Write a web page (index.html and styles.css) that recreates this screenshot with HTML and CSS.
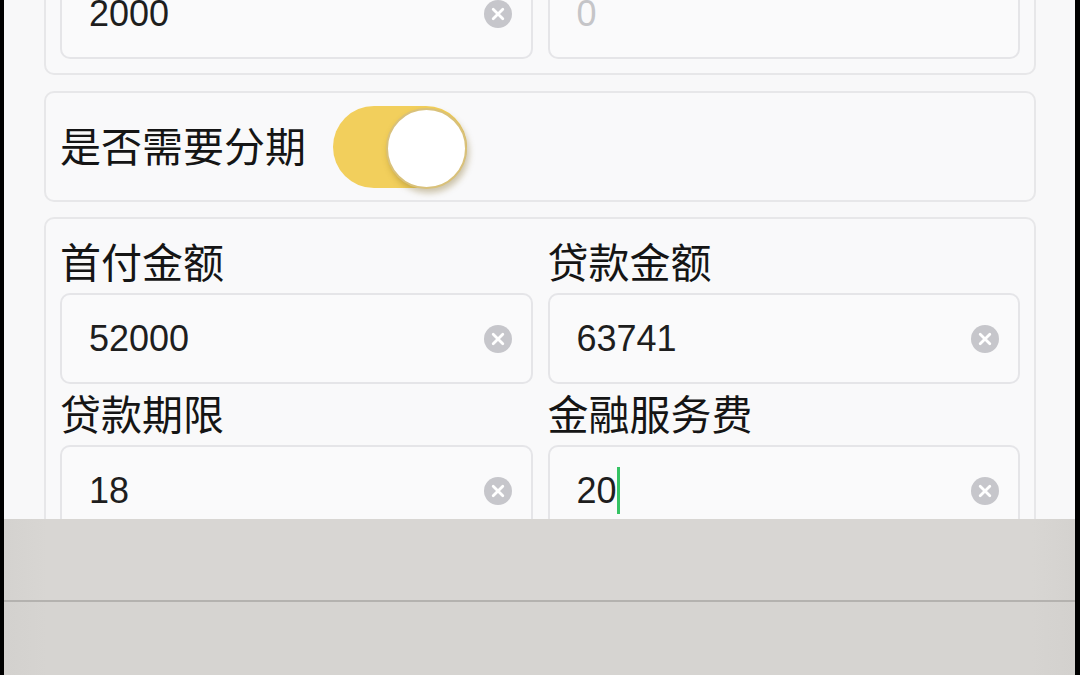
FILE: index.html
```html
<!DOCTYPE html>
<html lang="zh-CN">
<head>
<meta charset="utf-8">
<title>分期</title>
<link rel="stylesheet" href="styles.css">
</head>
<body>
<div class="screen">
  <div class="content">
    <section class="card card-top">
      <div class="grid">
        <div class="field">
          <span class="value">2000</span>
          <span class="clear"><svg viewBox="0 0 28 28" width="28" height="28"><circle cx="14" cy="14" r="14" fill="#c6c6cb"/><path d="M9.2 9.2 L18.8 18.8 M18.8 9.2 L9.2 18.8" stroke="#fff" stroke-width="2.8" stroke-linecap="round"/></svg></span>
        </div>
        <div class="field">
          <span class="value placeholder">0</span>
        </div>
      </div>
    </section>

    <section class="card card-switch">
      <span class="switch-label">是否需要分期</span>
      <span class="toggle"><span class="knob"></span></span>
    </section>

    <section class="card card-form">
      <div class="grid">
        <div class="cell">
          <div class="label">首付金额</div>
          <div class="field">
            <span class="value">52000</span>
            <span class="clear"><svg viewBox="0 0 28 28" width="28" height="28"><circle cx="14" cy="14" r="14" fill="#c6c6cb"/><path d="M9.2 9.2 L18.8 18.8 M18.8 9.2 L9.2 18.8" stroke="#fff" stroke-width="2.8" stroke-linecap="round"/></svg></span>
          </div>
        </div>
        <div class="cell">
          <div class="label">贷款金额</div>
          <div class="field">
            <span class="value">63741</span>
            <span class="clear"><svg viewBox="0 0 28 28" width="28" height="28"><circle cx="14" cy="14" r="14" fill="#c6c6cb"/><path d="M9.2 9.2 L18.8 18.8 M18.8 9.2 L9.2 18.8" stroke="#fff" stroke-width="2.8" stroke-linecap="round"/></svg></span>
          </div>
        </div>
        <div class="cell">
          <div class="label">贷款期限</div>
          <div class="field">
            <span class="value">18</span>
            <span class="clear"><svg viewBox="0 0 28 28" width="28" height="28"><circle cx="14" cy="14" r="14" fill="#c6c6cb"/><path d="M9.2 9.2 L18.8 18.8 M18.8 9.2 L9.2 18.8" stroke="#fff" stroke-width="2.8" stroke-linecap="round"/></svg></span>
          </div>
        </div>
        <div class="cell">
          <div class="label">金融服务费</div>
          <div class="field">
            <span class="value">20<span class="caret"></span></span>
            <span class="clear"><svg viewBox="0 0 28 28" width="28" height="28"><circle cx="14" cy="14" r="14" fill="#c6c6cb"/><path d="M9.2 9.2 L18.8 18.8 M18.8 9.2 L9.2 18.8" stroke="#fff" stroke-width="2.8" stroke-linecap="round"/></svg></span>
          </div>
        </div>
      </div>
    </section>
  </div>

  <div class="keyboard">
    <div class="kb-row"></div>
    <div class="kb-row kb-row-2"></div>
  </div>
</div>
</body>
</html>
```

FILE: styles.css
```css
* { box-sizing: border-box; }

html, body {
  margin: 0;
  padding: 0;
  background: #000;
  height: 675px;
  overflow: hidden;
}

.screen {
  margin: 0 5px 0 4px;
  height: 675px;
  background: #f8f8f9;
  display: flex;
  flex-direction: column;
  overflow: hidden;
  font-family: "Noto Sans CJK SC", "Noto Sans", sans-serif;
  color: #151515;
}

.content {
  height: 519px;
  flex: none;
  overflow: hidden;
  padding: 0 39px 0 40px;
}

.card {
  border: 2px solid #e7e7e9;
  border-radius: 10px;
  background: #f9f9fa;
  padding: 0 14px;
}

.card-top {
  margin-top: -48px;
  padding-top: 14px;
  padding-bottom: 14px;
}

.grid {
  display: grid;
  grid-template-columns: 1fr 1fr;
  column-gap: 15px;
}

.field {
  height: 91px;
  border: 2px solid #e5e5e8;
  border-radius: 10px;
  background: #fafafb;
  display: flex;
  align-items: center;
  justify-content: space-between;
  padding: 0 19px 0 27px;
}

.value {
  font-family: "Liberation Sans", "Noto Sans", sans-serif;
  font-size: 36px;
  color: #1e1e1e;
  display: flex;
  align-items: center;
  line-height: 1;
}

.placeholder { color: #c5c5c8; }

.clear {
  width: 28px;
  height: 28px;
  display: block;
}
.clear svg { display: block; }

.caret {
  display: inline-block;
  width: 3px;
  height: 47px;
  background: #35c364;
  margin-left: 0;
}

.card-switch {
  margin-top: 16px;
  height: 111px;
  display: flex;
  align-items: center;
  padding-left: 14px;
}

.switch-label {
  font-size: 41px;
  line-height: 1;
  color: #151515;
  margin-right: 27px;
  padding-bottom: 4px;
}

.toggle {
  width: 134px;
  height: 82px;
  border-radius: 41px;
  background: #f2cf5c;
  display: flex;
  justify-content: flex-end;
  align-items: center;
}

.knob {
  width: 81px;
  height: 81px;
  border-radius: 50%;
  background: #fff;
  border: 2px solid #d9c17a;
  box-shadow: 2px 4px 6px rgba(120, 95, 20, 0.35);
  margin-top: 3px;
}

.card-form {
  margin-top: 15px;
  padding-top: 13px;
  padding-bottom: 20px;
  height: 400px;
}

.label {
  height: 61px;
  display: flex;
  align-items: center;
  font-size: 41px;
  line-height: 1;
  color: #151515;
  padding-bottom: 5px;
}

.keyboard {
  flex: 1;
  background: #d6d3d0;
  display: flex;
  flex-direction: column;
}

.kb-row {
  height: 83px;
  border-bottom: 2px solid #b4b2af;
  background: linear-gradient(90deg, #d4d2cf 0, #d8d6d3 4%, #d8d6d3 96%, #d4d2cf 100%);
}

.kb-row-2 {
  flex: 1;
  border-bottom: none;
  background: linear-gradient(90deg, #d3d1ce 0, #d6d4d1 4%, #d6d4d1 96%, #d3d1ce 100%);
}
```
